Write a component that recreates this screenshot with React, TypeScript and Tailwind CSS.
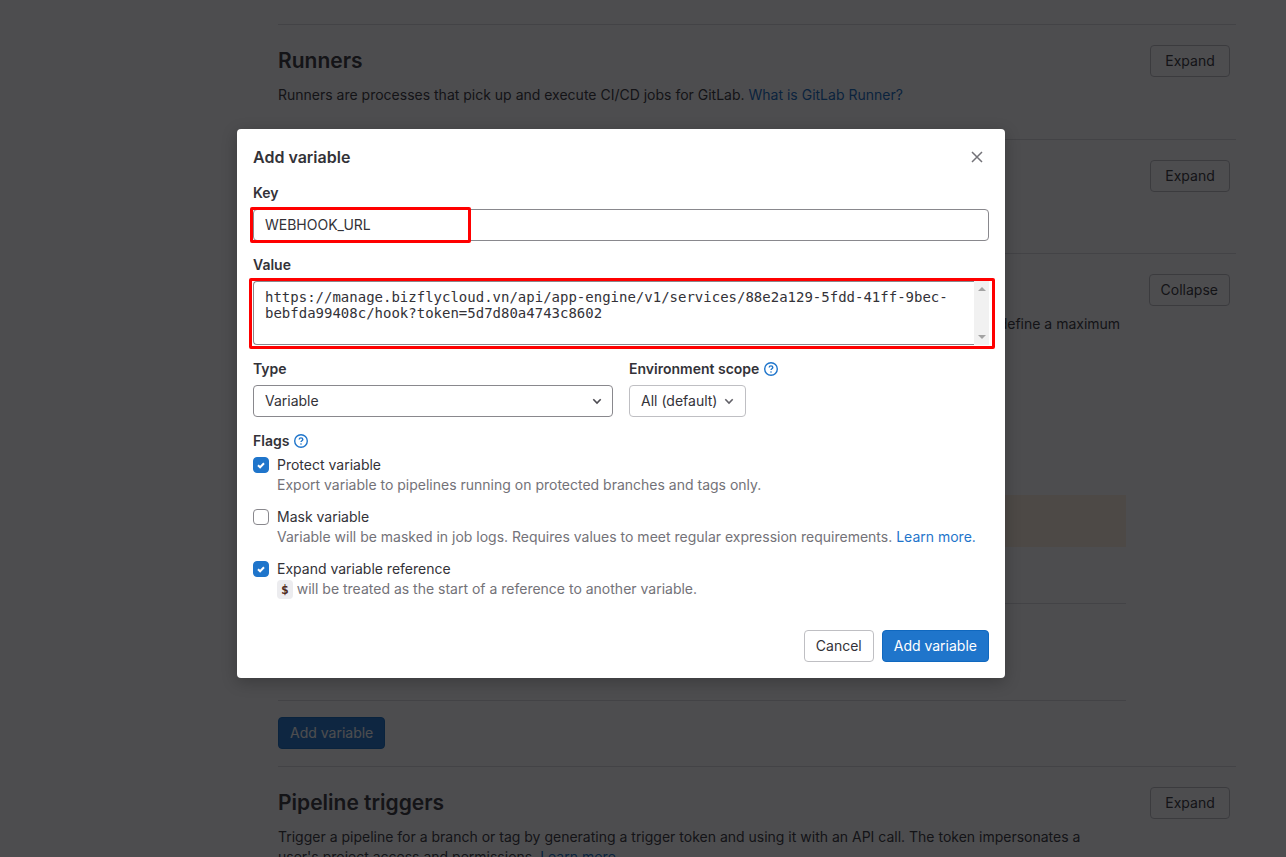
import type { ReactNode } from "react";

function HelpIcon() {
  return (
    <svg viewBox="0 0 16 16" className="h-4 w-4" fill="none" stroke="currentColor" strokeWidth="1.4" aria-hidden="true">
      <circle cx="8" cy="8" r="6.3" />
      <path d="M6.2 6.6c0-1 .8-1.7 1.8-1.7s1.8.6 1.8 1.6C9.8 7.8 8 7.8 8 9.1" />
      <circle cx="8" cy="11" r="0.8" fill="currentColor" stroke="none" />
    </svg>
  );
}

function ChevronIcon({ className }: { className: string }) {
  return (
    <svg viewBox="0 0 16 16" className={className} fill="none" stroke="currentColor" strokeWidth="1.6" aria-hidden="true">
      <path d="M4.3 6.3 8 10l3.7-3.7" />
    </svg>
  );
}

function Section({ title, action, className = "", children }: { title?: string; action: string; className?: string; children?: ReactNode }) {
  return (
    <section className={`flex items-start justify-between border-t border-[#dcdcde] ${className}`}>
      <div className="w-full max-w-[848px] pt-6">
        <h4 className="h-6 text-[21px] leading-6 font-semibold">{title}</h4>
        {children}
      </div>
      <button className="mt-5 mr-1.5 h-8 min-w-20 shrink-0 rounded border border-[#bfbfc3] px-[11px] text-sm leading-4">{action}</button>
    </section>
  );
}

function Flag({ id, label, checked, children }: { id: string; label: string; checked?: boolean; children: ReactNode }) {
  return (
    <div className="flex gap-2">
      <span className="relative mt-0.5 h-4 w-4 shrink-0">
        <input
          id={id}
          type="checkbox"
          defaultChecked={checked}
          className="peer block h-4 w-4 appearance-none rounded border border-[#89888d] bg-white checked:border-[#1f75cb] checked:bg-[#1f75cb]"
        />
        <svg viewBox="0 0 16 16" className="pointer-events-none absolute inset-0 hidden h-4 w-4 peer-checked:block" fill="none" stroke="#fff" strokeWidth="2">
          <path d="m5 8.3 2.1 2L11 6.2" />
        </svg>
      </span>
      <div className="text-sm leading-5">
        <label htmlFor={id} className="block">{label}</label>
        <p className="text-[#737278]">{children}</p>
      </div>
    </div>
  );
}

function SettingsPage() {
  return (
    <main className="mr-[50px] ml-[278px] pt-6 text-sm leading-5">
      <Section title="Runners" action="Expand" className="h-[115px]">
        <p className="mt-3">
          Runners are processes that pick up and execute CI/CD jobs for GitLab. <a href="#" className="text-[#1068bf]">What is GitLab Runner?</a>
        </p>
      </Section>
      <Section action="Expand" className="h-[114px]" />
      <Section action="Collapse" className="h-[513px]">
        <p className="mt-3 whitespace-nowrap">
          Variables store information, like passwords and secret keys, that you can use in job scripts. Each project can define a maximum
        </p>
        <div className="mt-[161px] h-[52px] bg-[#fdf1dd]" />
        <div className="mt-14 h-[97px] border-t border-[#dcdcde]" />
        <div className="border-t border-[#dcdcde] pt-4">
          <button className="h-8 rounded border border-[#1068bf] bg-[#1f75cb] px-[11px] leading-4 text-white">Add variable</button>
        </div>
      </Section>
      <Section title="Pipeline triggers" action="Expand">
        <p className="mt-3 max-w-[820px]">
          Trigger a pipeline for a branch or tag by generating a trigger token and using it with an API call. The token impersonates a user's project access and permissions. <a href="#" className="text-[#1068bf]">Learn more.</a>
        </p>
      </Section>
    </main>
  );
}

function VariableModal() {
  return (
    <div role="dialog" aria-labelledby="modal-title" className="w-full max-w-3xl rounded bg-white p-4 text-sm leading-4 shadow-[0_4px_16px_rgba(0,0,0,0.24)]">
      <header className="flex h-6 items-center justify-between">
        <h2 id="modal-title" className="text-base leading-6 font-semibold">Add variable</h2>
        <button aria-label="Close" className="mr-1 text-[#737278]">
          <svg viewBox="0 0 16 16" className="h-4 w-4" fill="none" stroke="currentColor" strokeWidth="1.5">
            <path d="m3 3 10 10M13 3 3 13" />
          </svg>
        </button>
      </header>

      <div className="mt-4">
        <label htmlFor="key" className="block font-semibold">Key</label>
        <div className="relative mt-2">
          <input id="key" defaultValue="WEBHOOK_URL" className="block h-8 w-full rounded border border-[#89888d] px-[11px] pb-0.5 text-sm" />
          <span className="pointer-events-none absolute -top-0.5 -left-[3px] h-9 w-[221px] rounded-xs border-3 border-[#ff0000]" />
        </div>
      </div>

      <div className="mt-4">
        <label htmlFor="value" className="block font-semibold">Value</label>
        <div className="relative mt-2 flex h-16">
          <textarea
            id="value"
            defaultValue="https://manage.bizflycloud.vn/api/app-engine/v1/services/88e2a129-5fdd-41ff-9bec-bebfda99408c/hook?token=5d7d80a4743c8602"
            className="block h-16 min-w-0 flex-1 resize-none overflow-hidden rounded-l border border-r-0 border-[#89888d] px-[11px] py-[7px] font-['DejaVu_Sans_Mono',monospace] text-sm leading-4"
          />
          <div className="flex w-[15px] flex-col items-center justify-between bg-[#f1f1f1] py-1.5 text-[#a3a3a3]">
            <svg viewBox="0 0 8 4" className="h-1 w-2" fill="currentColor"><path d="M0 4 4 0l4 4z" /></svg>
            <svg viewBox="0 0 8 4" className="h-1 w-2" fill="currentColor"><path d="m0 0 4 4 4-4z" /></svg>
          </div>
          <span className="pointer-events-none absolute -top-[3px] -right-1.5 -bottom-1 -left-1 rounded-xs border-3 border-[#ff0000]" />
        </div>
      </div>

      <div className="mt-4 grid grid-cols-2 gap-4">
        <div>
          <label htmlFor="type" className="block font-semibold">Type</label>
          <div className="relative mt-2">
            <select id="type" className="block h-8 w-full appearance-none rounded border border-[#89888d] bg-white px-[11px] text-sm">
              <option>Variable</option>
            </select>
            <ChevronIcon className="pointer-events-none absolute top-2 right-2 h-4 w-4 text-[#4c4b51]" />
          </div>
        </div>
        <div>
          <div className="flex h-4 items-center gap-1 font-semibold">
            <span id="scope-label">Environment scope</span>
            <a href="#" aria-label="Environment scope help" className="text-[#1f75cb]"><HelpIcon /></a>
          </div>
          <button aria-describedby="scope-label" className="mt-2 flex h-8 items-center gap-1 rounded border border-[#bfbfc3] pr-2 pl-[11px]">
            All (default)
            <ChevronIcon className="h-4 w-4 text-[#626168]" />
          </button>
        </div>
      </div>

      <fieldset className="mt-4">
        <legend className="flex h-4 items-center gap-1 font-semibold">
          Flags
          <a href="#" aria-label="Flags help" className="text-[#1f75cb]"><HelpIcon /></a>
        </legend>
        <div className="mt-1.5 flex flex-col gap-3">
          <Flag id="protect" label="Protect variable" checked>
            Export variable to pipelines running on protected branches and tags only.
          </Flag>
          <Flag id="mask" label="Mask variable">
            Variable will be masked in job logs. Requires values to meet regular expression requirements. <a href="#" className="text-[#1f75cb]">Learn more.</a>
          </Flag>
          <Flag id="expand" label="Expand variable reference" checked>
            <code className="rounded bg-[#ececef] px-1 py-0.5 font-['DejaVu_Sans_Mono',monospace] text-[13px] font-bold text-[#4e291a]">$</code> will be treated as the start of a reference to another variable.
          </Flag>
        </div>
      </fieldset>

      <footer className="mt-[30px] flex justify-end gap-2">
        <button className="h-8 rounded border border-[#bfbfc3] px-[11px]">Cancel</button>
        <button className="h-8 rounded border border-[#1068bf] bg-[#1f75cb] px-[11px] text-white">Add variable</button>
      </footer>
    </div>
  );
}

export default function App() {
  return (
    <div className="relative h-screen overflow-hidden bg-white font-['Inter',sans-serif] text-[#333238]">
      <SettingsPage />
      <div className="absolute inset-0 flex items-start justify-center bg-[rgba(8,8,11,0.72)] pt-[129px] pr-11">
        <VariableModal />
      </div>
    </div>
  );
}
